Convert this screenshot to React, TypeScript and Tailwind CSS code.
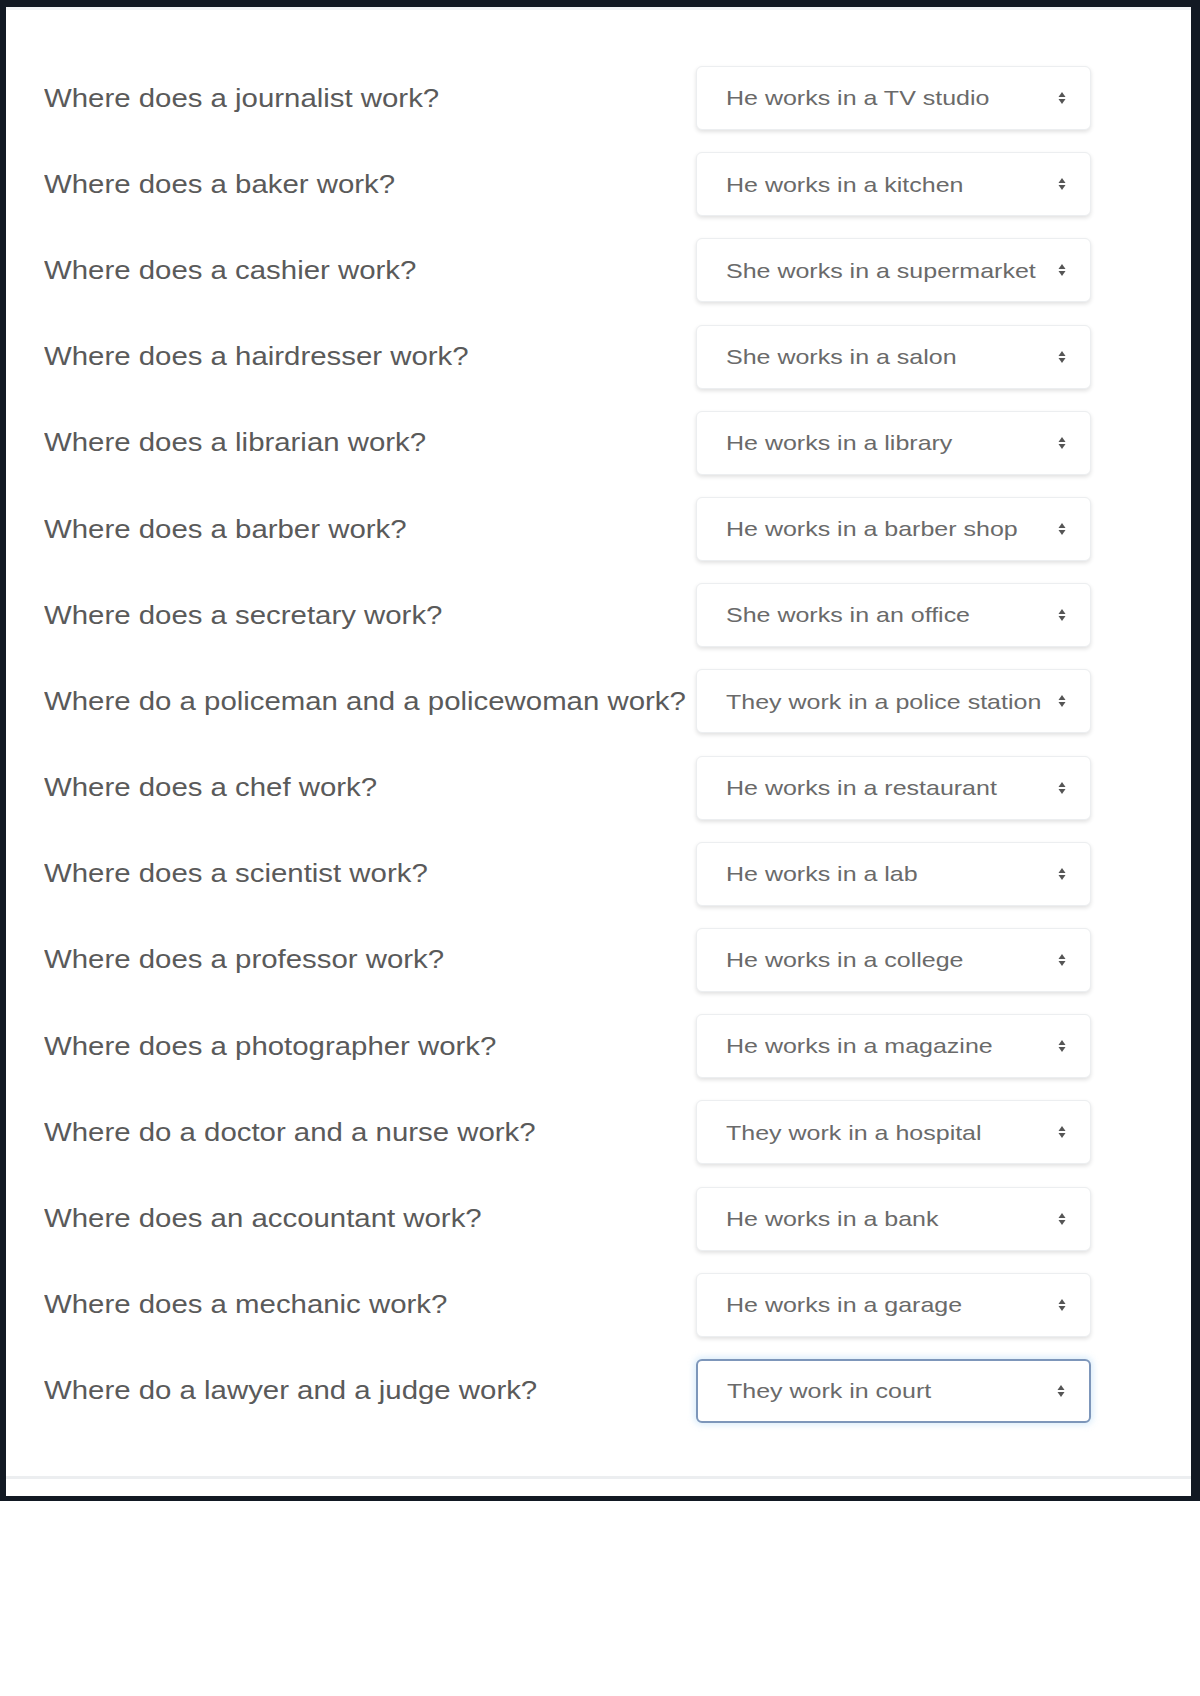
const rows = [
  { q: 'Where does a journalist work?', a: 'He works in a TV studio' },
  { q: 'Where does a baker work?', a: 'He works in a kitchen' },
  { q: 'Where does a cashier work?', a: 'She works in a supermarket' },
  { q: 'Where does a hairdresser work?', a: 'She works in a salon' },
  { q: 'Where does a librarian work?', a: 'He works in a library' },
  { q: 'Where does a barber work?', a: 'He works in a barber shop' },
  { q: 'Where does a secretary work?', a: 'She works in an office' },
  { q: 'Where do a policeman and a policewoman work?', a: 'They work in a police station' },
  { q: 'Where does a chef work?', a: 'He works in a restaurant' },
  { q: 'Where does a scientist work?', a: 'He works in a lab' },
  { q: 'Where does a professor work?', a: 'He works in a college' },
  { q: 'Where does a photographer work?', a: 'He works in a magazine' },
  { q: 'Where do a doctor and a nurse work?', a: 'They work in a hospital' },
  { q: 'Where does an accountant work?', a: 'He works in a bank' },
  { q: 'Where does a mechanic work?', a: 'He works in a garage' },
  { q: 'Where do a lawyer and a judge work?', a: 'They work in court' },
];

// tiny up/down triangles like a native select
const SortArrows = () => (
  <svg width="8" height="14" viewBox="0 0 8 14" className="shrink-0">
    <path d="M4 1 L7.5 6 L0.5 6 Z" fill="#555" />
    <path d="M4 13 L7.5 8 L0.5 8 Z" fill="#555" />
  </svg>
);

const App = () => {
  return (
    <div className="w-[1200px] h-[1696px] bg-white font-['Liberation_Sans',Arial,sans-serif]">
      <div className="h-[1501px] border-t-[7px] border-l-[6px] border-r-[9px] border-b-[5px] border-[#121923] bg-white flex flex-col">
        <div className="h-[3px] bg-[#f3f5f7]" />
        <div className="flex-1 pt-[45px] pl-[38px]">
          {rows.map((row, i) => {
            const focused = i === rows.length - 1;
            return (
              <div key={i} className="h-[86.2px] flex items-center">
                <div className="w-[652px] whitespace-nowrap">
                  <span className="inline-block origin-left scale-x-[1.13] text-[26px] text-[#5a5a5a]">
                    {row.q}
                  </span>
                </div>
                <div
                  className={`w-[395px] h-[64px] rounded-[6px] flex items-center justify-between pl-[29px] pr-[24px] bg-white ${
                    focused
                      ? 'border-2 border-[#7d96ba] shadow-[0_0_6px_2px_rgba(150,200,240,0.35)]'
                      : 'border border-[#eceef0] shadow-[0_2px_4px_rgba(0,0,0,0.12)]'
                  }`}
                >
                  <span className="inline-block origin-left scale-x-[1.19] text-[21px] text-[#6a6a6a] whitespace-nowrap">
                    {row.a}
                  </span>
                  <SortArrows />
                </div>
              </div>
            );
          })}
        </div>
        <div className="h-[3px] bg-[#eceef0] mb-[17px]" />
      </div>
    </div>
  );
};

export default App;
